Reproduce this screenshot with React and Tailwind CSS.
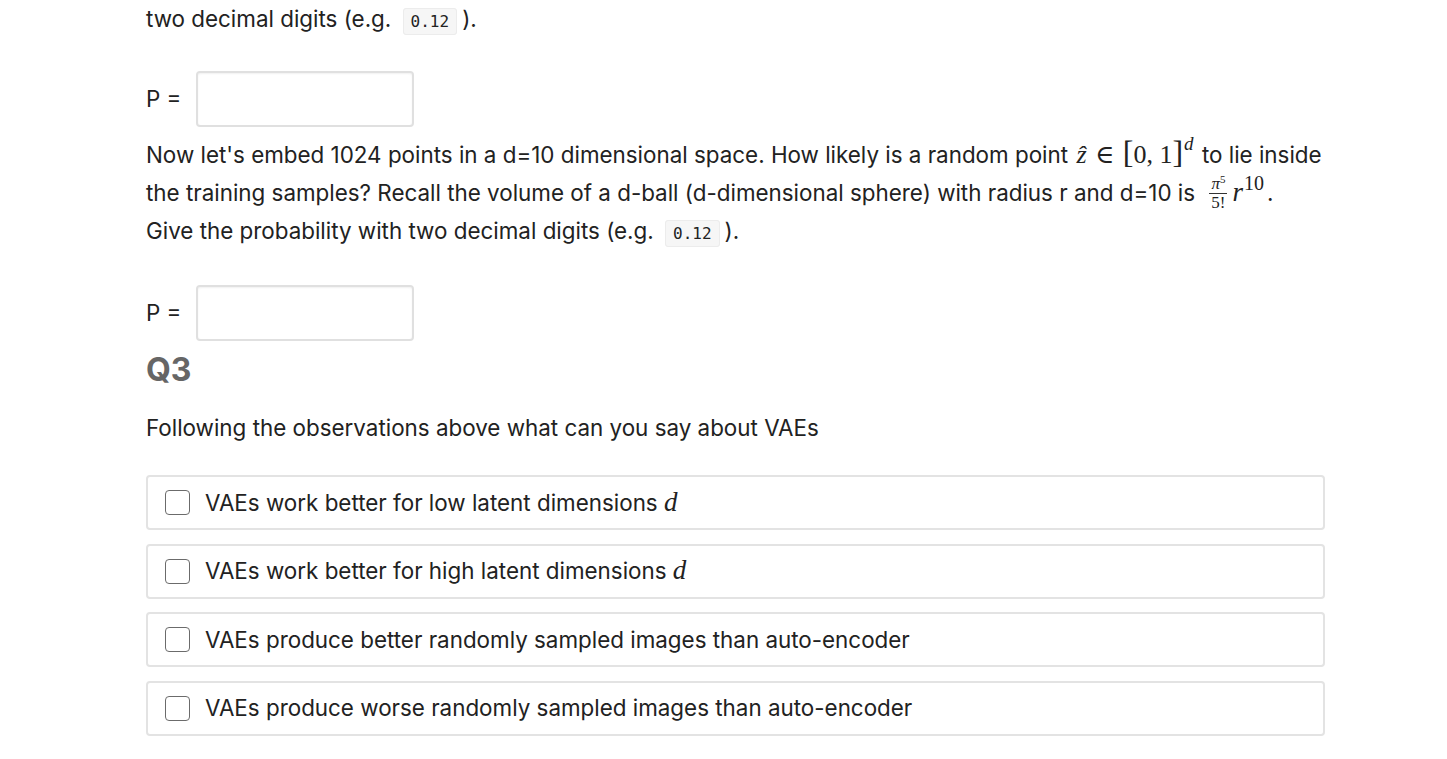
import React from "react";

const mathFont = { fontFamily: '"Liberation Serif", "DejaVu Serif", serif' };

function Code({ children }) {
  return (
    <code className="mx-[5px] rounded-[3px] border border-[#ececec] bg-[#f6f6f6] px-[7px] py-[3px] font-['DejaVu_Sans_Mono',monospace] text-[16px] leading-none text-[#222]">
      {children}
    </code>
  );
}

function AnswerRow() {
  return (
    <div className="flex items-center">
      <span className="w-[50px] whitespace-nowrap">P =</span>
      <input
        type="text"
        className="h-[56px] w-[218px] rounded-[4px] border-2 border-[#e0e0e0] bg-white shadow-[inset_0_1px_2px_rgba(0,0,0,0.06)] outline-none"
      />
    </div>
  );
}

function Option({ children }) {
  return (
    <label className="flex h-[55px] items-center rounded-[4px] border-2 border-[#e3e3e3] px-[17px]">
      <span className="mr-[15px] h-[25px] w-[25px] shrink-0 rounded-[4px] border border-[#6b6b6b] bg-white" />
      <span>{children}</span>
    </label>
  );
}

function VarD() {
  return (
    <span style={mathFont} className="text-[27px] leading-none italic">
      d
    </span>
  );
}

export default function App() {
  return (
    <div className="min-h-screen bg-white font-['Inter',sans-serif] text-[22.4px] leading-[38px] text-[#222]">
      <div className="ml-[146px] w-[1179px] pb-6">
        <p>
          two decimal digits (e.g. <Code>0.12</Code>).
        </p>

        <div className="mt-[33px]">
          <AnswerRow />
        </div>

        <p className="mt-[9px]">
          Now let's embed 1024 points in a d=10 dimensional space. How likely is a random point{" "}
          <span style={mathFont} className="mx-[2px] text-[26px] leading-none">
            <i>ẑ</i> <span className="mx-[2px]">∈</span> <span className="text-[32px] leading-none">[</span>0,{" "}
            1<span className="text-[32px] leading-none">]</span>
            <span className="relative -top-[13px] ml-[1px] text-[19px] italic">d</span>
          </span>{" "}
          to lie inside the training samples? Recall the volume of a d-ball (d-dimensional sphere) with radius r
          and d=10 is{" "}
          <span style={mathFont} className="ml-[8px] leading-none">
            <span className="inline-flex flex-col items-center align-[12px] text-[17px] leading-[14px]">
              <span className="border-b border-[#333] px-[2px] pb-[1px]">
                <i>π</i>
                <span className="relative -top-[6px] text-[11px]">5</span>
              </span>
              <span className="pt-[2px]">5!</span>
            </span>
            <span className="ml-[5px] text-[27px] italic">r</span>
            <span className="relative -top-[11px] ml-[1px] text-[20px]">10</span>
          </span>
          <span className="ml-[3px]">.</span>
          <br />
          Give the probability with two decimal digits (e.g. <Code>0.12</Code>).
        </p>

        <div className="mt-[35px]">
          <AnswerRow />
        </div>

        <h3 className="mt-[11px] text-[32px] font-bold leading-[36px] text-[#666]">Q3</h3>

        <p className="mt-[21px]">Following the observations above what can you say about VAEs</p>

        <div className="mt-[28px] flex flex-col gap-[13.6px]">
          <Option>
            VAEs work better for low latent dimensions <VarD />
          </Option>
          <Option>
            VAEs work better for high latent dimensions <VarD />
          </Option>
          <Option>VAEs produce better randomly sampled images than auto-encoder</Option>
          <Option>VAEs produce worse randomly sampled images than auto-encoder</Option>
        </div>
      </div>
    </div>
  );
}
